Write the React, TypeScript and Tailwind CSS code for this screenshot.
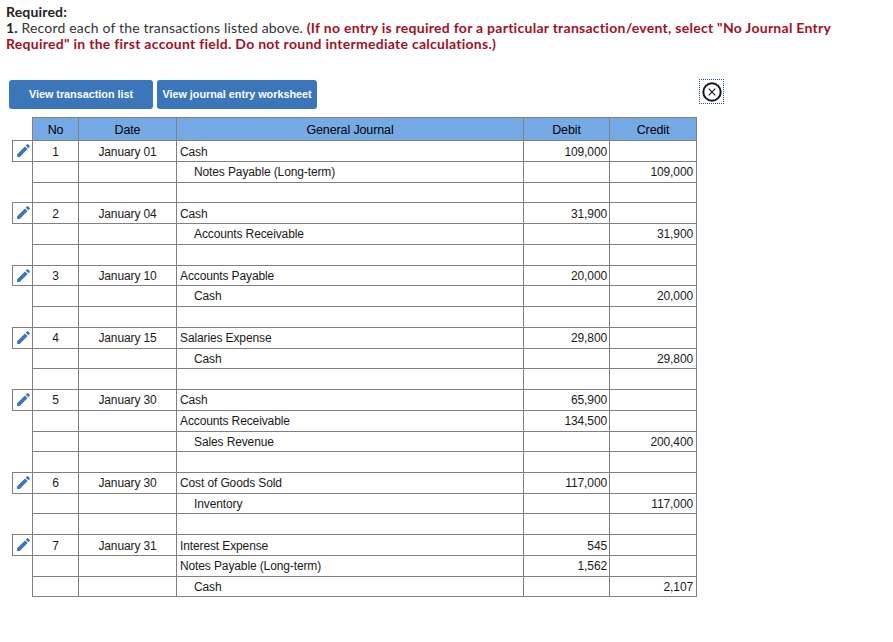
import React from 'react';

interface Line {
    no?: string;
    date?: string;
    account?: string;
    indent?: boolean;
    debit?: string;
    credit?: string;
}

const lines: Line[] = [
    { no: '1', date: 'January 01', account: 'Cash', debit: '109,000' },
    { account: 'Notes Payable (Long-term)', indent: true, credit: '109,000' },
    {},
    { no: '2', date: 'January 04', account: 'Cash', debit: '31,900' },
    { account: 'Accounts Receivable', indent: true, credit: '31,900' },
    {},
    { no: '3', date: 'January 10', account: 'Accounts Payable', debit: '20,000' },
    { account: 'Cash', indent: true, credit: '20,000' },
    {},
    { no: '4', date: 'January 15', account: 'Salaries Expense', debit: '29,800' },
    { account: 'Cash', indent: true, credit: '29,800' },
    {},
    { no: '5', date: 'January 30', account: 'Cash', debit: '65,900' },
    { account: 'Accounts Receivable', debit: '134,500' },
    { account: 'Sales Revenue', indent: true, credit: '200,400' },
    {},
    { no: '6', date: 'January 30', account: 'Cost of Goods Sold', debit: '117,000' },
    { account: 'Inventory', indent: true, credit: '117,000' },
    {},
    { no: '7', date: 'January 31', account: 'Interest Expense', debit: '545' },
    { account: 'Notes Payable (Long-term)', debit: '1,562' },
    { account: 'Cash', indent: true, credit: '2,107' },
];

// rows that come out a pixel shorter in the original
const shortRows = [2, 6, 10, 14, 17, 21];
// rows whose text sits a pixel lower
const lowRows = [0, 3, 19];

const Pencil = () => (
    <svg viewBox="0 0 24 24" className="w-[17px] h-[17px] fill-[#3b76bb]">
        <path d="M3 17.25V21h3.75L17.81 9.94l-3.75-3.75L3 17.25zM20.71 7.04a1 1 0 0 0 0-1.41l-2.34-2.34a1 1 0 0 0-1.41 0l-1.83 1.83 3.75 3.75 1.83-1.83z" />
    </svg>
);

const cell = 'border border-[#808080] p-0 leading-none';
const head = 'border border-[#808080] p-0 pt-[2px] leading-none bg-[#76aae4] font-normal text-[12.5px]';

export default function App() {
    return (
        <div className="w-[893px] h-[642px] bg-white overflow-hidden font-['Liberation_Sans',Arial,sans-serif] text-[12px] tracking-[-0.12px] text-[#1a1a1a]">
            <div className="pl-[6px] pt-[4px] font-['Lato',sans-serif] text-[14px] leading-[16px] text-[#333] tracking-[0.17px]">
                <p className="font-bold text-[#222]">Required:</p>
                <p>
                    <b className="text-[#222]">1.</b> Record each of the transactions listed above.{' '}
                    <b className="text-[#a30f24] tracking-[0.27px]">
                        (If no entry is required for a particular transaction/event, select "No Journal Entry
                        <br />
                        Required" in the first account field. Do not round intermediate calculations.)
                    </b>
                </p>
            </div>

            <div className="flex items-start mt-[28px] ml-[9px] h-[37px] tracking-normal">
                <button className="w-[144px] h-[29px] bg-[#3b76bb] rounded-[3px] text-white text-[10.8px] font-bold">
                    View transaction list
                </button>
                <button className="w-[160px] h-[29px] ml-[4px] bg-[#3b76bb] rounded-[3px] text-white text-[10.8px] font-bold">
                    View journal entry worksheet
                </button>
                <div className="w-[25px] h-[25px] ml-[382px] -mt-[1px] pl-[1px] pt-[1px] border border-dotted border-[#1f4e8c] flex items-center justify-center">
                    <svg viewBox="0 0 20 20" className="w-[20px] h-[20px] fill-none stroke-[#14141f]">
                        <circle cx="10" cy="10" r="8.7" strokeWidth="2" />
                        <path d="M6.7 6.7l6.6 6.6M13.3 6.7l-6.6 6.6" strokeWidth="1.1" />
                    </svg>
                </div>
            </div>

            <table className="ml-[12px] table-fixed border-collapse w-[685px]">
                <colgroup>
                    <col className="w-[20px]" />
                    <col className="w-[46px]" />
                    <col className="w-[98px]" />
                    <col className="w-[347px]" />
                    <col className="w-[86px]" />
                    <col className="w-[87px]" />
                </colgroup>
                <thead>
                    <tr className="h-[23px] text-black">
                        <th className="p-0 border-0" />
                        <th className={head}>No</th>
                        <th className={head}>Date</th>
                        <th className={head}>General Journal</th>
                        <th className={head}>Debit</th>
                        <th className={head}>Credit</th>
                    </tr>
                </thead>
                <tbody>
                    {lines.map((line, i) => {
                        const nudge = lowRows.includes(i) ? 'pt-[2px]' : '';
                        return (
                            <tr key={i} className={shortRows.includes(i) ? 'h-[20px]' : 'h-[21px]'}>
                                {line.no ? (
                                    <td className="border border-[#808080] p-0">
                                        <div className="flex justify-center pl-[1px] -mt-[1px]">
                                            <Pencil />
                                        </div>
                                    </td>
                                ) : (
                                    <td className="p-0 border-0" />
                                )}
                                <td className={`${cell} ${nudge} text-center`}>{line.no}</td>
                                <td className={`${cell} ${nudge} text-center`}>{line.date}</td>
                                <td className={`${cell} ${nudge} ${line.indent ? 'pl-[17px]' : 'pl-[3px]'}`}>{line.account}</td>
                                <td className={`${cell} ${nudge} text-right pr-[2px]`}>{line.debit}</td>
                                <td className={`${cell} ${nudge} text-right pr-[3px]`}>{line.credit}</td>
                            </tr>
                        );
                    })}
                </tbody>
            </table>
        </div>
    );
}
